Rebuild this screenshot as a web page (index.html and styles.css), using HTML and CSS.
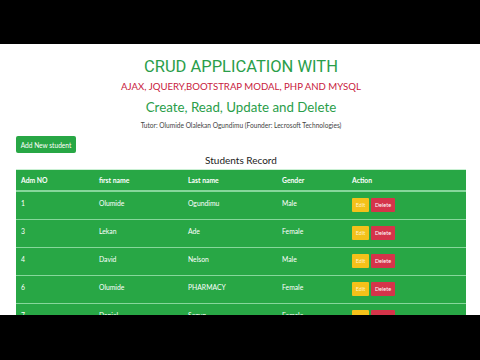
FILE: index.html
```html
<!DOCTYPE html>
<html>

<head>
    <title>CRUD Application</title>
    <link rel="stylesheet" href="styles.css">
</head>

<body>
    <div class="bar"></div>
    <div class="screen">
        <div class="header">
            <h1 class="title">CRUD APPLICATION WITH</h1>
            <div class="subtitle">AJAX, JQUERY,BOOTSTRAP MODAL, PHP AND MYSQL</div>
            <h2 class="tagline">Create, Read, Update and Delete</h2>
            <div class="tutor">Tutor: Olumide Olalekan Ogundimu (Founder: Lecrosoft Technologies)</div>
        </div>

        <button class="btnAdd">Add New student</button>
        <div class="tableTitle">Students Record</div>

        <table class="records">
            <colgroup>
                <col style="width: 78px">
                <col style="width: 89px">
                <col style="width: 94px">
                <col style="width: 70px">
                <col>
            </colgroup>
            <thead>
                <tr>
                    <th>Adm NO</th>
                    <th>first name</th>
                    <th>Last name</th>
                    <th>Gender</th>
                    <th>Action</th>
                </tr>
            </thead>
            <tbody>
                <tr>
                    <td>1</td>
                    <td>Olumide</td>
                    <td>Ogundimu</td>
                    <td>Male</td>
                    <td><button class="btnEdit">Edit</button><button class="btnDelete">Delete</button></td>
                </tr>
                <tr>
                    <td>3</td>
                    <td>Lekan</td>
                    <td>Ade</td>
                    <td>Female</td>
                    <td><button class="btnEdit">Edit</button><button class="btnDelete">Delete</button></td>
                </tr>
                <tr>
                    <td>4</td>
                    <td>David</td>
                    <td>Nelson</td>
                    <td>Male</td>
                    <td><button class="btnEdit">Edit</button><button class="btnDelete">Delete</button></td>
                </tr>
                <tr>
                    <td>6</td>
                    <td>Olumide</td>
                    <td>PHARMACY</td>
                    <td>Female</td>
                    <td><button class="btnEdit">Edit</button><button class="btnDelete">Delete</button></td>
                </tr>
                <tr>
                    <td>7</td>
                    <td>Daniel</td>
                    <td>Segun</td>
                    <td>Female</td>
                    <td><button class="btnEdit">Edit</button><button class="btnDelete">Delete</button></td>
                </tr>
            </tbody>
        </table>
    </div>
    <div class="bar bottom"></div>
</body>

</html>
```

FILE: styles.css
```css
html,
body {
    margin: 0;
    padding: 0;
}

body {
    background-color: #000000;
    font-family: Lato, "Noto Sans", Arial, sans-serif;
    width: 480px;
    height: 360px;
    overflow: hidden;
}

.bar {
    height: 44px;
    background-color: #000000;
}

.bar.bottom {
    height: 45px;
}

.screen {
    height: 271px;
    background-color: #ffffff;
    overflow: hidden;
    padding: 0 14px 0 16px;
    box-sizing: border-box;
}

.header {
    text-align: center;
}

.title {
    margin: 0;
    padding-top: 10px;
    font-family: Roboto, Lato, sans-serif;
    font-size: 16.5px;
    line-height: 25px;
    font-weight: normal;
    color: #2a9e4a;
}

.subtitle {
    margin-top: 0;
    font-size: 9.6px;
    line-height: 16px;
    color: #c8203c;
}

.tagline {
    margin: 2px 0 0 0;
    font-size: 13.3px;
    line-height: 20px;
    font-weight: normal;
    color: #2a9e4a;
}

.tutor {
    margin-top: 1px;
    font-size: 6.6px;
    line-height: 14px;
    color: #444444;
}

.btnAdd {
    display: block;
    margin-top: 4px;
    height: 17px;
    width: 60px;
    padding: 0;
    font-family: inherit;
    font-size: 6.6px;
    color: #ffffff;
    background-color: #28a745;
    border: none;
    border-radius: 2px;
}

.tableTitle {
    text-align: center;
    font-size: 10px;
    line-height: 14px;
    color: #222222;
    margin-top: 0;
}

.records {
    margin-top: 2px;
    width: 450px;
    table-layout: fixed;
    border-collapse: collapse;
    background-color: #28a745;
    color: #ffffff;
    font-size: 6.8px;
}

.records th {
    text-align: left;
    font-weight: bold;
    height: 20px;
    padding: 0 0 0 5px;
    border-top: 1px solid #c9f0d3;
    border-bottom: 2px solid #86d79b;
}

.records td {
    height: 28px;
    padding: 7px 0 0 5px;
    vertical-align: top;
    border-bottom: 1px solid #86d79b;
    box-sizing: border-box;
}

.btnEdit,
.btnDelete {
    font-family: inherit;
    font-size: 5.5px;
    color: #fff4cc;
    border: none;
    border-radius: 1px;
    height: 14px;
    padding: 0;
    margin-top: -1px;
    vertical-align: top;
}

.btnEdit {
    width: 17px;
    background-color: #f4c11a;
}

.btnDelete {
    width: 24px;
    margin-left: 2px;
    background-color: #d5344a;
    color: #ffffff;
}
```
